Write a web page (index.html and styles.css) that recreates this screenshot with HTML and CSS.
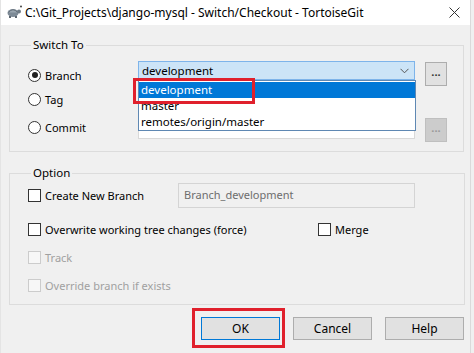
FILE: index.html
```html
<!DOCTYPE html>
<html>
<head>
<meta charset="utf-8">
<link rel="stylesheet" href="styles.css">
</head>
<body>
<div class="window">
  <div class="titlebar">
    <svg class="app-icon" width="16" height="14" viewBox="0 0 16 14">
      <ellipse cx="7" cy="8" rx="5.5" ry="4" fill="#7d8a96"/>
      <path d="M2.5 7.5 Q7 2 11.5 7.5" fill="#9aa6b0" stroke="#5c6670" stroke-width="0.8"/>
      <circle cx="13" cy="6.5" r="2" fill="#6f7b86"/>
      <rect x="3" y="11" width="2" height="2" fill="#5c6670"/>
      <rect x="9" y="11" width="2" height="2" fill="#5c6670"/>
      <circle cx="15" cy="1.5" r="1" fill="#444"/>
    </svg>
    <span class="title">C:\Git_Projects\django-mysql - Switch/Checkout - TortoiseGit</span>
    <svg class="close" width="11" height="11" viewBox="0 0 11 11">
      <path d="M0.5 0.5 L10.5 10.5 M10.5 0.5 L0.5 10.5" stroke="#333" stroke-width="1"/>
    </svg>
  </div>
  <div class="content">
    <fieldset class="group switch">
      <legend>Switch To</legend>
      <div class="row row1">
        <label class="radio-item"><span class="radio checked"></span>Branch</label>
        <div class="combo-wrap">
          <div class="combo">
            <span>development</span>
            <svg class="chev" width="9" height="6" viewBox="0 0 9 6"><path d="M0.5 0.8 L4.5 4.8 L8.5 0.8" fill="none" stroke="#555" stroke-width="1"/></svg>
          </div>
          <div class="droplist">
            <div class="item selected">development</div>
            <div class="item">master</div>
            <div class="item">remotes/origin/master</div>
            <span class="mark mark-dev"></span>
          </div>
        </div>
        <div class="dots">...</div>
      </div>
      <div class="row row2">
        <label class="radio-item"><span class="radio"></span>Tag</label>
      </div>
      <div class="row row3">
        <label class="radio-item"><span class="radio"></span>Commit</label>
        <div class="field"></div>
        <div class="dots disabled">...</div>
      </div>
    </fieldset>
    <fieldset class="group option">
      <legend>Option</legend>
      <div class="orow orow1">
        <label class="check-item w150"><span class="check"></span>Create New Branch</label>
        <div class="textbox">Branch_development</div>
      </div>
      <div class="orow">
        <label class="check-item w290"><span class="check"></span>Overwrite working tree changes (force)</label>
        <label class="check-item"><span class="check"></span>Merge</label>
      </div>
      <div class="orow">
        <label class="check-item off"><span class="check"></span>Track</label>
      </div>
      <div class="orow">
        <label class="check-item off"><span class="check"></span>Override branch if exists</label>
      </div>
    </fieldset>
    <div class="buttons">
      <div class="btn-wrap">
        <div class="btn default">OK</div>
        <span class="mark mark-ok"></span>
      </div>
      <div class="btn">Cancel</div>
      <div class="btn">Help</div>
    </div>
  </div>
</div>
</body>
</html>
```
FILE: styles.css
```css
* { box-sizing: border-box; }
html, body { margin: 0; padding: 0; }
body {
  font-family: "Noto Sans", "Open Sans", sans-serif;
  font-size: 11px;
  color: #000;
  background: #f0f0f0;
}
.window {
  width: 471px;
  height: 353px;
  background: #f0f0f0;
  border-right: 1px solid #dadada;
  border-left: 1px solid #e4e4e4;
  overflow: hidden;
}
.titlebar {
  height: 25px;
  background: #fff;
  display: flex;
  align-items: center;
  padding-left: 5px;
  font-size: 12px;
}
.app-icon { margin-right: 3px; margin-top: -2px; }
.title { flex: 1; white-space: nowrap; color: #000; }
.close { margin-right: 10px; }
.content { padding: 12px 0 0 8px; }
.group {
  margin: 0;
  padding: 0 0 0 18px;
  border: 1px solid #dcdcdc;
  border-radius: 0;
  min-width: 0;
}
.group legend {
  padding: 0 2px;
  margin-left: 3px;
  font-size: 11.5px;
  line-height: 16px;
}
.switch { width: 455px; padding-bottom: 10px; }
.row { display: flex; align-items: flex-start; }
.row1 { margin-top: 8px; height: 26px; }
.row2 { height: 30px; }
.row3 { height: 24px; }
.radio-item {
  width: 110px;
  display: flex;
  align-items: center;
  height: 20px;
}
.row1 .radio-item { margin-top: 4px; }
.row2 .radio-item { margin-top: 2px; }
.row3 .radio-item { margin-top: 0; }
.radio {
  width: 13px; height: 13px;
  border: 1px solid #333;
  border-radius: 50%;
  background: #fff;
  margin-right: 4px;
  position: relative;
  flex: none;
}
.radio.checked::after {
  content: "";
  position: absolute;
  left: 2.5px; top: 2.5px;
  width: 6px; height: 6px;
  border-radius: 50%;
  background: #222;
}
.combo-wrap { position: relative; width: 277px; }
.combo {
  height: 19px;
  background: #cce4f7;
  border: 1px solid #7eb4ea;
  display: flex;
  align-items: center;
  padding-left: 3px;
  justify-content: space-between;
  font-size: 11.5px;
}
.chev { margin-right: 5px; }
.droplist {
  position: absolute;
  left: 0; top: 19px;
  width: 278px;
  height: 51px;
  background: #fff;
  border: 1px solid #5f88b3;
  padding-top: 1px;
  z-index: 2;
  font-size: 11.5px;
}
.item { height: 16px; line-height: 15px; padding-left: 2px; }
.item.selected { background: #0078d7; color: #fff; }
.mark {
  position: absolute;
  border: 3px solid #e0202c;
  pointer-events: none;
}
.mark-dev { left: -6px; top: -3px; width: 122px; height: 26px; }
.dots {
  width: 22px; height: 24px;
  margin-left: 10px;
  margin-top: 1px;
  background: #e1e1e1;
  border: 1px solid #adadad;
  text-align: center;
  font-size: 11px;
  line-height: 18px;
  font-weight: bold;
  color: #333;
}
.dots.disabled { background: #cccccc; border-color: #bfbfbf; color: #999; }
.field {
  width: 277px; height: 22px;
  background: #fff;
  border: 1px solid #d9d9d9;
}
.option { width: 456px; margin-top: 13px; padding-bottom: 4px; height: 140px; }
.orow { display: flex; align-items: center; height: 28px; }
.orow1 { height: 25px; margin-top: 2px; margin-bottom: 7px; }
.check-item { display: flex; align-items: center; white-space: nowrap; }
.w150 { width: 150px; }
.w290 { width: 290px; }
.check {
  width: 13px; height: 13px;
  border: 1px solid #333;
  background: #fff;
  margin-right: 4px;
  flex: none;
}
.check-item.off { color: #a0a0a0; }
.check-item.off .check { border-color: #cccccc; background: #f7f7f7; }
.textbox {
  width: 237px; height: 25px;
  border: 1px solid #d4d4d4;
  background: #f0f0f0;
  color: #6d6d6d;
  padding-left: 5px;
  line-height: 22px;
}
.buttons {
  display: flex;
  justify-content: flex-end;
  gap: 13px;
  margin-top: 12px;
  padding-right: 6px;
}
.btn-wrap { position: relative; }
.btn {
  width: 79px; height: 23px;
  background: #e1e1e1;
  border: 1px solid #adadad;
  text-align: center;
  line-height: 21px;
  font-size: 12px;
}
.btn.default { border-color: #0078d7; }
.mark-ok { left: -9px; top: -9px; width: 93px; height: 40px; }
```
